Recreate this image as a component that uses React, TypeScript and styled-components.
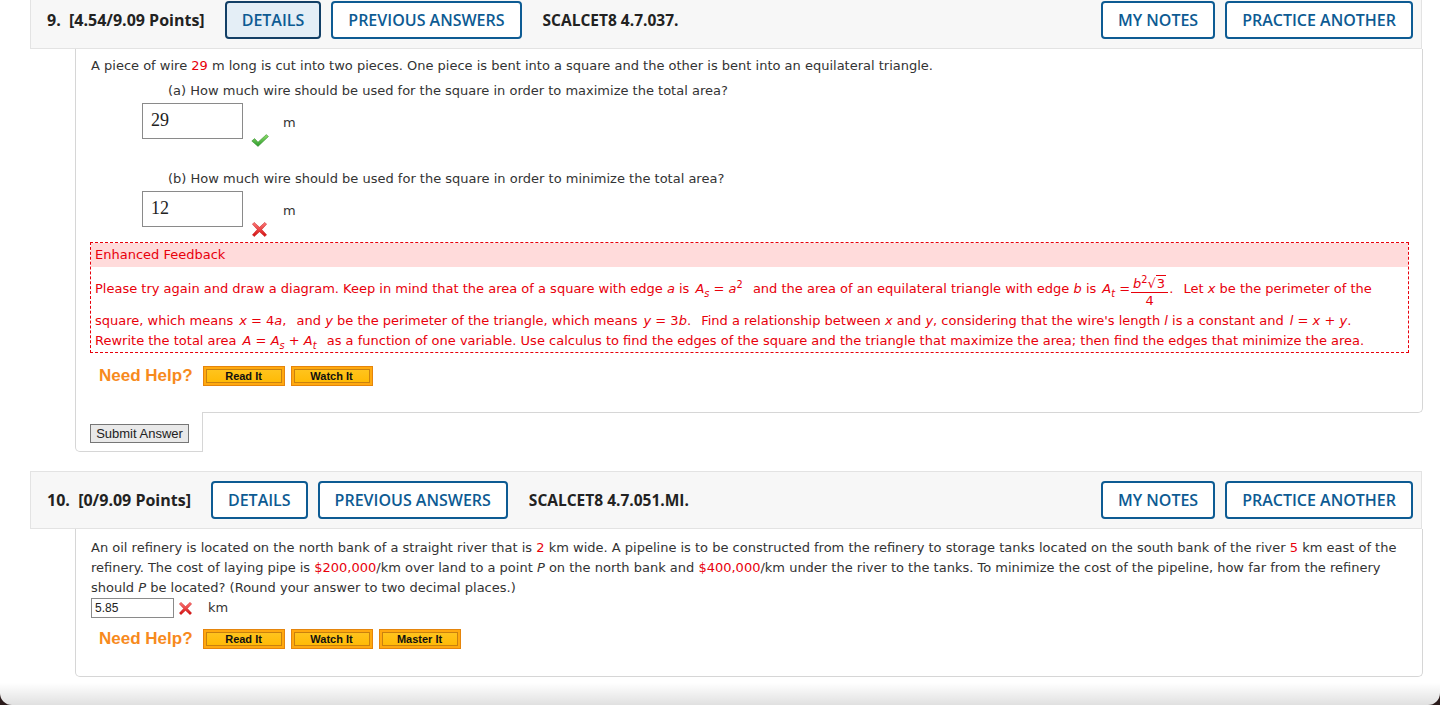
import React from 'react';
import styled, { createGlobalStyle } from 'styled-components';

const GlobalStyle = createGlobalStyle`
  html, body, #root {
    margin: 0;
    padding: 0;
    height: 100%;
  }
  body {
    background: #2a1a1a;
    overflow: hidden;
  }
  sub, sup {
    line-height: 0;
    font-size: 75%;
  }
`;

const Page = styled.div`
  height: 100%;
  overflow: hidden;
  background: #fff;
  border-radius: 0 0 12px 12px;
  display: flex;
  flex-direction: column;
`;

const Content = styled.div`
  margin: -9px 18px 0 30px;
  flex-shrink: 0;
`;

const Question = styled.section`
  & + & {
    margin-top: 19px;
  }
`;

const Header = styled.div`
  display: flex;
  align-items: center;
  height: 58px;
  box-sizing: border-box;
  padding: 0 8px 0 16px;
  background: #f7f7f7;
  border: 1px solid #e3e3e3;
  font-family: "Open Sans", sans-serif;
`;

const Points = styled.span`
  font-size: 16px;
  font-weight: 700;
  color: #222;
  margin-right: 20px;
  white-space: pre;
`;

const Source = styled.span`
  font-size: 15.5px;
  font-weight: 700;
  color: #222;
  margin-left: 21px;
`;

const HeaderButton = styled.button<{ $active?: boolean }>`
  height: 38px;
  box-sizing: border-box;
  padding: 0 15px;
  border: 2px solid ${p => (p.$active ? '#123f66' : '#0d5b93')};
  border-radius: 4px;
  background: ${p => (p.$active ? '#e4eef6' : '#fff')};
  color: #0d5b93;
  font-family: "Open Sans", sans-serif;
  font-size: 16px;
  font-weight: 600;
  cursor: pointer;
  & + & {
    margin-left: 10px;
  }
`;

const RightGroup = styled.div`
  margin-left: auto;
  display: flex;
`;

const Body = styled.div<{ $pad: string; $tab?: boolean }>`
  margin: 0 -1px 0 45px;
  border: 1px solid #d6d6d6;
  border-top: none;
  border-radius: 0 0 5px ${p => (p.$tab ? '0' : '5px')};
  padding: ${p => p.$pad};
  font-family: "DejaVu Sans", Verdana, sans-serif;
  font-size: 13px;
  color: #333;
`;

const Line = styled.div<{ $h?: number }>`
  line-height: ${p => p.$h ?? 16}px;
  white-space: nowrap;
`;

const Red = styled.span`
  color: #e8000b;
`;

const PartQuestion = styled.div<{ $top: number }>`
  margin: ${p => p.$top}px 0 0 77px;
  line-height: 16px;
`;

const AnswerRow = styled.div<{ $indent: number; $top: number }>`
  display: flex;
  align-items: flex-start;
  margin: ${p => p.$top}px 0 0 ${p => p.$indent}px;
`;

const BigInput = styled.div`
  width: 101px;
  height: 36px;
  box-sizing: border-box;
  border: 1px solid #8a8a8a;
  padding: 0 8px;
  font-family: "Liberation Serif", serif;
  font-size: 18px;
  line-height: 32px;
  color: #222;
`;

const SmallInput = styled.div`
  width: 83px;
  height: 20px;
  box-sizing: border-box;
  border: 1px solid #8a8a8a;
  padding: 0 3px;
  font-family: "Liberation Sans", Arial, sans-serif;
  font-size: 12px;
  line-height: 18px;
  color: #222;
`;

const MarkSlot = styled.div<{ $top: number; $left: number }>`
  padding-top: ${p => p.$top}px;
  margin-left: ${p => p.$left}px;
  line-height: 0;
`;

const Unit = styled.span<{ $top: number; $left: number }>`
  margin: ${p => p.$top}px 0 0 ${p => p.$left}px;
  line-height: 16px;
`;

const Feedback = styled.div`
  margin: 5px 0 0 -1px;
  border: 1px dashed #e8000b;
  color: #e8000b;
`;

const FeedbackTitle = styled.div`
  height: 24px;
  line-height: 24px;
  padding-left: 4px;
  background: #ffdbdb;
`;

const FeedbackText = styled.div`
  padding: 0 4px 1px;
`;

const Var = styled.i`
  font-style: italic;
`;

const Eq = styled.span`
  margin: 0 6px;
`;

const Fraction = styled.span`
  display: inline-flex;
  flex-direction: column;
  align-items: center;
  vertical-align: 5px;
  line-height: 15px;
  margin: 0 1px;
`;

const Numerator = styled.span`
  border-bottom: 1px solid #e8000b;
  padding: 0 2px 1px;
`;

const Root = styled.span`
  border-top: 1px solid #e8000b;
  padding: 0 1px;
`;

const HelpRow = styled.div<{ $top: number }>`
  display: flex;
  align-items: center;
  margin: ${p => p.$top}px 0 0 8px;
`;

const HelpLabel = styled.span`
  font-family: "Liberation Sans", Arial, sans-serif;
  font-size: 17px;
  font-weight: 700;
  color: #f78a1d;
  margin-right: 10px;
`;

const HelpButton = styled.button`
  width: 82px;
  height: 20px;
  padding: 0;
  border: 1px solid #e5850c;
  background: linear-gradient(#ffc623, #ffb800);
  box-shadow: inset 0 0 0 2px #ffa90f, inset 0 0 0 3px #c9810f;
  font-family: "Liberation Sans", Arial, sans-serif;
  font-size: 11px;
  font-weight: 700;
  color: #111;
  cursor: pointer;
  & + & {
    margin-left: 6px;
  }
`;

const Footer = styled.div`
  display: flex;
  margin: -1px -1px 0 45px;
`;

const SubmitTab = styled.div`
  background: #fff;
  border: 1px solid #d6d6d6;
  border-top: none;
  border-radius: 0 0 0 5px;
  padding: 12px 13px 8px 14px;
  line-height: 0;
`;

const SubmitButton = styled.button`
  width: 99px;
  height: 19px;
  padding: 0;
  border: 1px solid #767676;
  background: #e9e9e9;
  font-family: "Liberation Sans", Arial, sans-serif;
  font-size: 13px;
  color: #222;
  cursor: pointer;
`;

const BottomShade = styled.div`
  margin-top: auto;
  height: 22px;
  flex-shrink: 0;
  background: linear-gradient(rgba(0, 0, 0, 0), rgba(0, 0, 0, 0.12));
`;

const CheckMark = () => (
  <svg width="18" height="13" viewBox="0 0 18 13">
    <defs>
      <linearGradient id="chk" x1="0" y1="0" x2="0" y2="1">
        <stop offset="0" stopColor="#8ee06a" />
        <stop offset="1" stopColor="#2b9a2c" />
      </linearGradient>
    </defs>
    <path d="M0.8 7 L3.6 4.6 L7 8.2 L15.4 0.6 L17.4 2.6 L7 12.4 Z" fill="url(#chk)" stroke="#3d8d34" strokeWidth="0.6" />
  </svg>
);

const CrossMark = ({ size }: { size: number }) => (
  <svg width={size} height={size} viewBox="0 0 15 15">
    <defs>
      <linearGradient id="crs" x1="0" y1="0" x2="0" y2="1">
        <stop offset="0" stopColor="#ff7b7b" />
        <stop offset="1" stopColor="#d40f0f" />
      </linearGradient>
    </defs>
    <path
      d="M2.2 0.4 L7.5 5.3 L12.8 0.4 L14.6 2.2 L9.7 7.5 L14.6 12.8 L12.8 14.6 L7.5 9.7 L2.2 14.6 L0.4 12.8 L5.3 7.5 L0.4 2.2 Z"
      fill="url(#crs)"
      stroke="#c21010"
      strokeWidth="0.5"
    />
  </svg>
);

const QuestionHeader = ({
  num,
  score,
  source,
  active,
}: {
  num: string;
  score: string;
  source: string;
  active?: boolean;
}) => (
  <Header>
    <Points>{`${num}  ${score}`}</Points>
    <HeaderButton $active={active}>DETAILS</HeaderButton>
    <HeaderButton>PREVIOUS ANSWERS</HeaderButton>
    <Source>{source}</Source>
    <RightGroup>
      <HeaderButton>MY NOTES</HeaderButton>
      <HeaderButton>PRACTICE ANOTHER</HeaderButton>
    </RightGroup>
  </Header>
);

const App: React.FC = () => (
  <>
    <GlobalStyle />
    <Page>
      <Content>
        <Question>
          <QuestionHeader num="9." score="[4.54/9.09 Points]" source="SCALCET8 4.7.037." active />
          <Body $pad="9px 13px 26px 15px" $tab>
            <Line>
              A piece of wire <Red>29</Red> m long is cut into two pieces. One piece is bent into a square and the
              other is bent into an equilateral triangle.
            </Line>
            <PartQuestion $top={9}>
              (a) How much wire should be used for the square in order to maximize the total area?
            </PartQuestion>
            <AnswerRow $indent={51} $top={4}>
              <BigInput>29</BigInput>
              <MarkSlot $top={31} $left={8}>
                <CheckMark />
              </MarkSlot>
              <Unit $top={12} $left={14}>m</Unit>
            </AnswerRow>
            <PartQuestion $top={24}>
              (b) How much wire should be used for the square in order to minimize the total area?
            </PartQuestion>
            <AnswerRow $indent={51} $top={4}>
              <BigInput>12</BigInput>
              <MarkSlot $top={31} $left={9}>
                <CrossMark size={15} />
              </MarkSlot>
              <Unit $top={12} $left={16}>m</Unit>
            </AnswerRow>
            <Feedback>
              <FeedbackTitle>Enhanced Feedback</FeedbackTitle>
              <FeedbackText>
                <Line $h={44}>
                  Please try again and draw a diagram. Keep in mind that the area of a square with edge <Var>a</Var> is
                  <Eq>
                    <Var>A</Var>
                    <sub>
                      <Var>s</Var>
                    </sub>{' '}
                    = <Var>a</Var>
                    <sup>2</sup>
                  </Eq>{' '}
                  and the area of an equilateral triangle with edge <Var>b</Var> is
                  <Eq>
                    <Var>A</Var>
                    <sub>
                      <Var>t</Var>
                    </sub>{' '}
                    =
                    <Fraction>
                      <Numerator>
                        <Var>b</Var>
                        <sup>2</sup>√<Root>3</Root>
                      </Numerator>
                      <span>4</span>
                    </Fraction>
                    .
                  </Eq>{' '}
                  Let <Var>x</Var> be the perimeter of the
                </Line>
                <Line $h={20}>
                  square, which means
                  <Eq>
                    <Var>x</Var> = 4<Var>a</Var>,
                  </Eq>{' '}
                  and <Var>y</Var> be the perimeter of the triangle, which means
                  <Eq>
                    <Var>y</Var> = 3<Var>b</Var>.
                  </Eq>{' '}
                  Find a relationship between <Var>x</Var> and <Var>y</Var>, considering that the wire's length{' '}
                  <Var>l</Var> is a constant and
                  <Eq>
                    <Var>l</Var> = <Var>x</Var> + <Var>y</Var>.
                  </Eq>
                </Line>
                <Line $h={20}>
                  Rewrite the total area
                  <Eq>
                    <Var>A</Var> = <Var>A</Var>
                    <sub>
                      <Var>s</Var>
                    </sub>{' '}
                    + <Var>A</Var>
                    <sub>
                      <Var>t</Var>
                    </sub>
                  </Eq>{' '}
                  as a function of one variable. Use calculus to find the edges of the square and the triangle that
                  maximize the area; then find the edges that minimize the area.
                </Line>
              </FeedbackText>
            </Feedback>
            <HelpRow $top={13}>
              <HelpLabel>Need Help?</HelpLabel>
              <HelpButton>Read It</HelpButton>
              <HelpButton>Watch It</HelpButton>
            </HelpRow>
          </Body>
          <Footer>
            <SubmitTab>
              <SubmitButton>Submit Answer</SubmitButton>
            </SubmitTab>
          </Footer>
        </Question>

        <Question>
          <QuestionHeader num="10." score="[0/9.09 Points]" source="SCALCET8 4.7.051.MI." />
          <Body $pad="9px 13px 27px 15px">
            <Line $h={20}>
              An oil refinery is located on the north bank of a straight river that is <Red>2</Red> km wide. A pipeline
              is to be constructed from the refinery to storage tanks located on the south bank of the river{' '}
              <Red>5</Red> km east of the
            </Line>
            <Line $h={20}>
              refinery. The cost of laying pipe is <Red>$200,000</Red>/km over land to a point <Var>P</Var> on the
              north bank and <Red>$400,000</Red>/km under the river to the tanks. To minimize the cost of the pipeline,
              how far from the refinery
            </Line>
            <Line $h={20}>
              should <Var>P</Var> be located? (Round your answer to two decimal places.)
            </Line>
            <AnswerRow $indent={0} $top={0}>
              <SmallInput>5.85</SmallInput>
              <MarkSlot $top={4} $left={5}>
                <CrossMark size={13} />
              </MarkSlot>
              <Unit $top={2} $left={16}>km</Unit>
            </AnswerRow>
            <HelpRow $top={11}>
              <HelpLabel>Need Help?</HelpLabel>
              <HelpButton>Read It</HelpButton>
              <HelpButton>Watch It</HelpButton>
              <HelpButton>Master It</HelpButton>
            </HelpRow>
          </Body>
        </Question>
      </Content>
      <BottomShade />
    </Page>
  </>
);

export default App;
